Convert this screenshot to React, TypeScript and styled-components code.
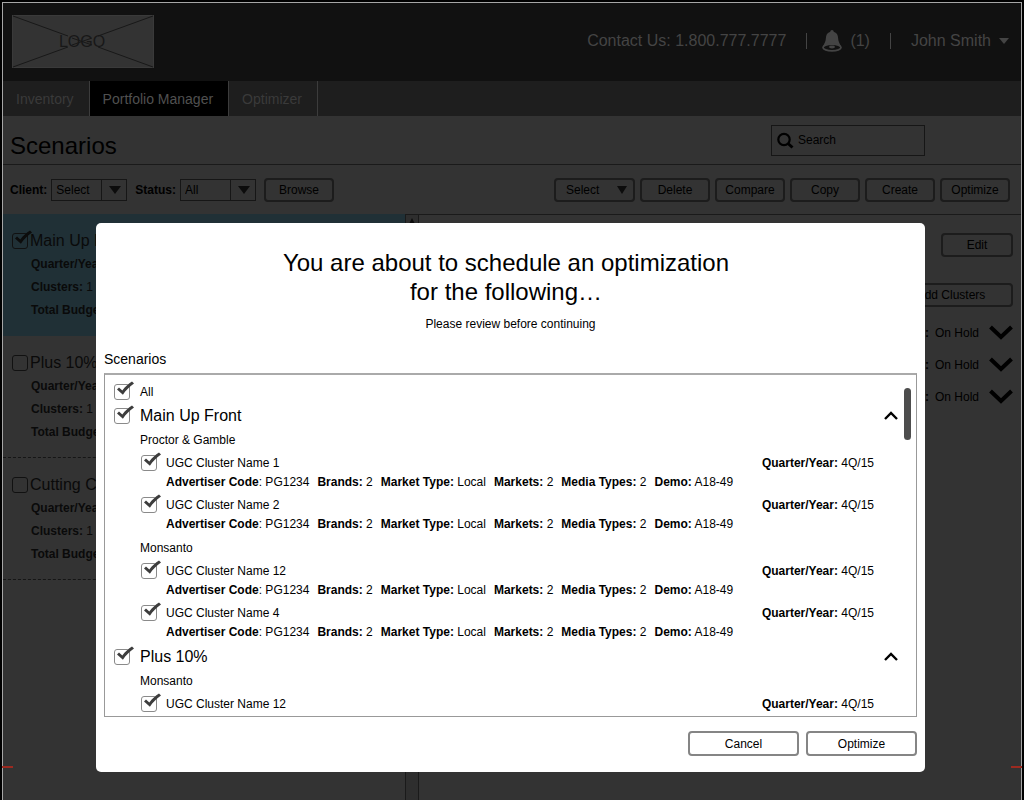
import React from "react";
import styled, { createGlobalStyle } from "styled-components";

const GlobalStyle = createGlobalStyle`
  * { box-sizing: border-box; }
  body {
    margin: 0;
    background: #000;
    color: #000;
    font-family: "Liberation Sans", Helvetica, Arial, sans-serif;
    font-size: 12px;
  }
  button, input, select { font: inherit; color: inherit; }
  h1, h2, h3, h4, p, ul { margin: 0; padding: 0; font-weight: 400; }
  ul { list-style: none; }
`;

const Page = styled.div`
  position: relative;
  height: 100vh;
  min-height: 780px;
  padding: 2px 2px 0;
  overflow: hidden;
`;

const Frame = styled.div`
  display: flex;
  flex-direction: column;
  height: 100%;
  border: 1px solid #a6a6a6;
  border-bottom: 0;
  background: #333;
`;

const Header = styled.header`
  display: flex;
  align-items: center;
  justify-content: space-between;
  flex: none;
  height: 78px;
  padding: 0 12px 2px 9px;
  background: #111;
  color: #444;
  font-size: 16px;
`;

const Logo = styled.svg`
  display: block;
  width: 142px;
  height: 53px;
`;

const Account = styled.div`
  display: flex;
  align-items: center;
  gap: 20px;
`;

const Bar = styled.span`
  width: 1px;
  height: 16px;
  background: #444;
`;

const Plain = styled.button`
  display: flex;
  align-items: center;
  gap: 8px;
  padding: 0;
  border: 0;
  background: none;
`;

const BellButton = styled(Plain)`
  margin-left: -5px;
`;

const Tabs = styled.nav`
  display: flex;
  flex: none;
  height: 35px;
  background: #1e1e1e;
  font-size: 14px;
`;

const Tab = styled.a<{ $active?: boolean }>`
  display: flex;
  align-items: center;
  padding: 0 15px 0 13px;
  border-right: 1px solid #3c3c3c;
  background: ${(p) => (p.$active ? "#000" : "transparent")};
  color: ${(p) => (p.$active ? "#505050" : "#3a3a3a")};
  text-decoration: none;
`;

const TitleRow = styled.div`
  display: flex;
  align-items: center;
  justify-content: space-between;
  flex: none;
  height: 49px;
  padding: 0 96px 0 7px;
  border-bottom: 1px solid #1a1a1a;
`;

const PageTitle = styled.h1`
  padding-top: 12px;
  font-size: 24px;
  line-height: 28px;
`;

const SearchBox = styled.label`
  display: flex;
  align-items: center;
  gap: 4px;
  width: 154px;
  height: 31px;
  padding: 0 5px;
  border: 1px solid #161616;
`;

const SearchInput = styled.input`
  min-width: 0;
  flex: 1;
  padding: 0;
  border: 0;
  outline: 0;
  background: none;
  &::placeholder { color: #000; opacity: 1; }
`;

const Toolbar = styled.div`
  display: flex;
  align-items: center;
  justify-content: space-between;
  flex: none;
  height: 49px;
  padding: 0 11px 0 7px;
`;

const Filters = styled.div`
  display: flex;
  align-items: center;
  gap: 8px;
`;

const Actions = styled.div`
  display: flex;
  gap: 5px;
`;

const FilterLabel = styled.label`
  display: flex;
  align-items: center;
  gap: 4px;
  font-weight: 700;
`;

const SelectWrap = styled.span<{ $bold?: boolean }>`
  position: relative;
  display: block;
  width: ${(p) => (p.$bold ? 81 : 76)}px;
  font-weight: 400;
`;

const SelectField = styled.select<{ $bold?: boolean }>`
  display: block;
  appearance: none;
  width: 100%;
  height: ${(p) => (p.$bold ? 24 : 22)}px;
  padding: 0 24px 0 ${(p) => (p.$bold ? 10 : 4)}px;
  border: ${(p) => (p.$bold ? "2px solid #1c1c1c" : "1px solid #161616")};
  border-radius: ${(p) => (p.$bold ? 4 : 0)}px;
  background: none;
`;

const SelectArrow = styled.span<{ $bold?: boolean }>`
  position: absolute;
  top: 0;
  right: 0;
  bottom: 0;
  display: flex;
  align-items: center;
  justify-content: center;
  width: 26px;
  border-left: ${(p) => (p.$bold ? "0" : "1px solid #161616")};
  pointer-events: none;
`;

const DarkButton = styled.button<{ $width?: number }>`
  width: ${(p) => p.$width ?? 70}px;
  height: 24px;
  padding: 0;
  border: 2px solid #1c1c1c;
  border-radius: 4px;
  background: none;
`;

const Split = styled.div`
  display: grid;
  grid-template-columns: 402px 14px 1fr;
  flex: 1;
  min-height: 0;
`;

const ScenarioList = styled.ul`
  min-width: 0;
`;

const ScenarioItem = styled.li<{ $selected?: boolean }>`
  height: 122px;
  padding: 15px 9px 0;
  border-bottom: 1px ${(p) => (p.$selected ? "solid #203036" : "dashed #161616")};
  background: ${(p) => (p.$selected ? "#203036" : "transparent")};
`;

const ScenarioName = styled.label`
  display: flex;
  align-items: center;
  gap: 2px;
  height: 24px;
  color: #0a0a0a;
  font-size: 16px;
`;

const ScenarioFact = styled.p`
  padding-left: 19px;
  color: #0a0a0a;
  line-height: 23px;
`;

const Track = styled.div`
  display: flex;
  justify-content: center;
  padding-top: 3px;
  border: 1px solid #1a1a1a;
  border-bottom: 0;
  background: #2e2e2e;
`;

const Detail = styled.section`
  display: flex;
  flex-direction: column;
  align-items: flex-end;
  padding: 18px 8px 0 0;
  border-top: 1px solid #1a1a1a;
`;

const Tools = styled.div`
  display: flex;
  flex-direction: column;
  align-items: flex-end;
  gap: 26px;
  margin-bottom: 10px;
`;

const HoldRow = styled.div`
  display: flex;
  align-items: center;
  gap: 6px;
  height: 32px;
`;

const Hold = styled.span`
  padding-right: 4px;
`;

const CheckWrap = styled.span`
  position: relative;
  display: block;
  flex: none;
  width: 16px;
  height: 16px;
`;

const CheckInput = styled.input<{ $dark?: boolean }>`
  display: block;
  appearance: none;
  width: 16px;
  height: 16px;
  margin: 0;
  border: 1px solid ${(p) => (p.$dark ? "#111" : "#8a8a8a")};
  border-radius: 3px;
  background: transparent;
  & + svg { display: none; }
  &:checked + svg { display: block; }
`;

const CheckMark = styled.svg`
  position: absolute;
  top: -3px;
  left: 2px;
  width: 18px;
  height: 16px;
  pointer-events: none;
`;

const Tick = styled.span<{ $side: "left" | "right" }>`
  position: absolute;
  top: 766px;
  ${(p) => p.$side}: 2px;
  width: 11px;
  height: 2px;
  background: #9c2a20;
`;

const Overlay = styled.div`
  position: absolute;
  inset: 0;
  padding: 223px 99px 0 96px;
`;

const Dialog = styled.section`
  padding: 25px 8px 16px;
  border-radius: 5px;
  background: #fff;
`;

const DialogTitle = styled.h2`
  padding-right: 9px;
  font-size: 24px;
  line-height: 29px;
  text-align: center;
`;

const DialogNote = styled.p`
  margin-top: 10px;
  line-height: 16px;
  text-align: center;
`;

const ListTitle = styled.h3`
  margin: 17px 0 4px;
  font-size: 14px;
  line-height: 20px;
`;

const ListBox = styled.div`
  position: relative;
  height: 344px;
  padding: 6px 42px 0 9px;
  overflow: hidden;
  border: 1px solid #999;
  border-width: 2px 1px 1px;
  border-color: #aaa #999 #999;
`;

const Thumb = styled.span`
  position: absolute;
  top: 13px;
  right: 5px;
  width: 7px;
  height: 52px;
  border-radius: 4px;
  background: #4d4d4d;
`;

const AllRow = styled.label`
  display: flex;
  align-items: center;
  gap: 10px;
  height: 22px;
`;

const GroupRow = styled.div`
  display: flex;
  align-items: center;
  justify-content: space-between;
  height: 25px;
  margin-right: -24px;
`;

const GroupLabel = styled.label`
  display: flex;
  align-items: center;
  gap: 10px;
  font-size: 16px;
`;

const ClientName = styled.h4`
  padding-left: 26px;
  line-height: 24px;
`;

const Cluster = styled.div`
  padding: 0 0 3px 27px;
`;

const ClusterHead = styled.div`
  display: flex;
  align-items: center;
  justify-content: space-between;
  height: 22px;
`;

const ClusterName = styled.label`
  display: flex;
  align-items: center;
  gap: 9px;
`;

const Facts = styled.div`
  display: flex;
  gap: 8px;
  padding-left: 25px;
  line-height: 17px;
  white-space: nowrap;
`;

const Footer = styled.footer`
  display: flex;
  justify-content: flex-end;
  gap: 7px;
  margin-top: 14px;
`;

const DialogButton = styled.button`
  width: 111px;
  height: 25px;
  padding: 0;
  border: 2px solid #858585;
  border-radius: 4px;
  background: #fff;
`;

function Check({ id, on = true, dark = false }: { id: string; on?: boolean; dark?: boolean }) {
  return (
    <CheckWrap>
      <CheckInput type="checkbox" id={id} defaultChecked={on} $dark={dark} />
      <CheckMark viewBox="0 0 18 16" aria-hidden="true">
        <path
          d="M1 8.500 3 6.500 6.300 9.400C9 6 12.500 2.800 16 .6L18 2.600C13.500 5.800 9.800 9.400 6.900 13.800Z"
          fill={dark ? "#0c0c0c" : "#3d3d3d"}
        />
      </CheckMark>
    </CheckWrap>
  );
}

function Triangle({ width = 12, height = 8, fill = "#0c0c0c", up = false }) {
  return (
    <svg width={width} height={height} viewBox="0 0 12 8" preserveAspectRatio="none" aria-hidden="true">
      <path d={up ? "M0 8H12L6 0Z" : "M0 0H12L6 8Z"} fill={fill} />
    </svg>
  );
}

function Select({ label, value, bold }: { label?: string; value: string; bold?: boolean }) {
  return (
    <SelectWrap $bold={bold}>
      <SelectField $bold={bold} aria-label={label} defaultValue={value}>
        <option>{value}</option>
      </SelectField>
      <SelectArrow $bold={bold}>
        <Triangle width={bold ? 10 : 12} />
      </SelectArrow>
    </SelectWrap>
  );
}

const scenarios = [
  { name: "Main Up Front", selected: true },
  { name: "Plus 10%", selected: false },
  { name: "Cutting Costs", selected: false },
];

const groups = [
  {
    name: "Main Up Front",
    clients: [
      { name: "Proctor & Gamble", clusters: ["UGC Cluster Name 1", "UGC Cluster Name 2"] },
      { name: "Monsanto", clusters: ["UGC Cluster Name 12", "UGC Cluster Name 4"] },
    ],
  },
  {
    name: "Plus 10%",
    collapsedFacts: true,
    clients: [{ name: "Monsanto", clusters: ["UGC Cluster Name 12"] }],
  },
];

function ClusterEntry({ id, name, facts }: { id: string; name: string; facts: boolean }) {
  return (
    <Cluster>
      <ClusterHead>
        <ClusterName htmlFor={id}>
          <Check id={id} />
          {name}
        </ClusterName>
        <span><b>Quarter/Year:</b> 4Q/15</span>
      </ClusterHead>
      {facts && (
        <Facts>
          <span><b>Advertiser Code</b>: PG1234</span>
          <span><b>Brands:</b> 2</span>
          <span><b>Market Type:</b> Local</span>
          <span><b>Markets:</b> 2</span>
          <span><b>Media Types:</b> 2</span>
          <span><b>Demo:</b> A18-49</span>
        </Facts>
      )}
    </Cluster>
  );
}

export default function App() {
  return (
    <Page>
      <GlobalStyle />
      <Frame>
        <Header>
          <Logo viewBox="0 0 142 53" role="img" aria-label="Logo">
            <rect x="0.500" y="0.500" width="141" height="52" fill="#333" stroke="#3a3a3a" />
            <path d="M1 1 56 21M141 1 86 21M1 52 56 32M141 52 86 32M60 23 80 30M60 30 80 23" stroke="#181818" fill="none" />
            <text x="70" y="32" textAnchor="middle" fontSize="16" fill="#181818">LOGO</text>
          </Logo>
          <Account>
            <span>Contact Us: 1.800.777.7777</span>
            <Bar />
            <BellButton aria-label="Notifications (1)">
              <svg width="20" height="22" viewBox="0 0 20 22" aria-hidden="true">
                <path d="M10 0C8.900 0 8.400.8 8.300 1.700 5.300 2.600 4 5 3.900 8 3.800 11.500 2.600 13 .8 16.500 3 14.900 6.500 14.300 10 14.300S17 14.900 19.200 16.500C17.400 13 16.200 11.500 16.100 8 16 5 14.700 2.600 11.700 1.700 11.600.8 11.100 0 10 0Z" fill="#444" />
                <ellipse cx="10" cy="17.500" rx="9" ry="3.300" fill="none" stroke="#444" strokeWidth="1.800" />
                <ellipse cx="10" cy="17" rx="3" ry="1.400" fill="#444" />
              </svg>
              (1)
            </BellButton>
            <Bar />
            <Plain>
              John Smith
              <Triangle width={10} height={6} fill="#444" />
            </Plain>
          </Account>
        </Header>
        <Tabs>
          <Tab href="#inventory">Inventory</Tab>
          <Tab href="#portfolio" $active>Portfolio Manager</Tab>
          <Tab href="#optimizer">Optimizer</Tab>
        </Tabs>
        <TitleRow>
          <PageTitle>Scenarios</PageTitle>
          <SearchBox>
            <svg width="17" height="17" viewBox="0 0 17 17" fill="none" stroke="#000" aria-hidden="true">
              <circle cx="7" cy="7.500" r="5.700" strokeWidth="2.200" />
              <path d="m11 11.500 4.500 4" strokeWidth="3" />
            </svg>
            <SearchInput type="text" placeholder="Search" aria-label="Search" />
          </SearchBox>
        </TitleRow>
        <Toolbar>
          <Filters>
            <FilterLabel>Client: <Select value="Select" /></FilterLabel>
            <FilterLabel>Status: <Select value="All" /></FilterLabel>
            <DarkButton>Browse</DarkButton>
          </Filters>
          <Actions>
            <Select value="Select" label="Bulk selection" bold />
            <DarkButton>Delete</DarkButton>
            <DarkButton>Compare</DarkButton>
            <DarkButton>Copy</DarkButton>
            <DarkButton>Create</DarkButton>
            <DarkButton>Optimize</DarkButton>
          </Actions>
        </Toolbar>
        <Split>
          <ScenarioList>
            {scenarios.map((s, i) => (
              <ScenarioItem key={s.name} $selected={s.selected}>
                <ScenarioName htmlFor={`scenario-${i}`}>
                  <Check id={`scenario-${i}`} on={s.selected} dark />
                  {s.name}
                </ScenarioName>
                <ScenarioFact><b>Quarter/Year:</b> 4Q/15</ScenarioFact>
                <ScenarioFact><b>Clusters:</b> 1</ScenarioFact>
                <ScenarioFact><b>Total Budget:</b></ScenarioFact>
              </ScenarioItem>
            ))}
          </ScenarioList>
          <Track>
            <Triangle width={6} height={6} up />
          </Track>
          <Detail>
            <Tools>
              <DarkButton $width={72}>Edit</DarkButton>
              <DarkButton $width={124}>Add Clusters</DarkButton>
            </Tools>
            {[0, 1, 2].map((i) => (
              <HoldRow key={i}>
                <b>Status:</b>
                <Hold>On Hold</Hold>
                <svg width="24" height="16" viewBox="0 0 24 16" fill="none" stroke="#000" strokeWidth="4" aria-hidden="true">
                  <path d="M1.500 2 12 12 22.500 2" />
                </svg>
              </HoldRow>
            ))}
          </Detail>
        </Split>
      </Frame>
      <Tick $side="left" />
      <Tick $side="right" />
      <Overlay>
        <Dialog role="dialog" aria-modal="true" aria-labelledby="dialog-title">
          <DialogTitle id="dialog-title">
            You are about to schedule an optimization
            <br />
            for the following…
          </DialogTitle>
          <DialogNote>Please review before continuing</DialogNote>
          <ListTitle>Scenarios</ListTitle>
          <ListBox>
            <AllRow htmlFor="all">
              <Check id="all" />
              All
            </AllRow>
            {groups.map((g, gi) => (
              <div key={g.name}>
                <GroupRow>
                  <GroupLabel htmlFor={`group-${gi}`}>
                    <Check id={`group-${gi}`} />
                    {g.name}
                  </GroupLabel>
                  <Plain aria-label={`Collapse ${g.name}`}>
                    <svg width="14" height="9" viewBox="0 0 14 9" fill="none" stroke="#000" strokeWidth="2.400" aria-hidden="true">
                      <path d="M1 8 7 2 13 8" />
                    </svg>
                  </Plain>
                </GroupRow>
                {g.clients.map((c, ci) => (
                  <div key={c.name}>
                    <ClientName>{c.name}</ClientName>
                    {c.clusters.map((name, ni) => (
                      <ClusterEntry
                        key={name}
                        id={`cluster-${gi}-${ci}-${ni}`}
                        name={name}
                        facts={!g.collapsedFacts}
                      />
                    ))}
                  </div>
                ))}
              </div>
            ))}
            <Thumb />
          </ListBox>
          <Footer>
            <DialogButton>Cancel</DialogButton>
            <DialogButton>Optimize</DialogButton>
          </Footer>
        </Dialog>
      </Overlay>
    </Page>
  );
}
